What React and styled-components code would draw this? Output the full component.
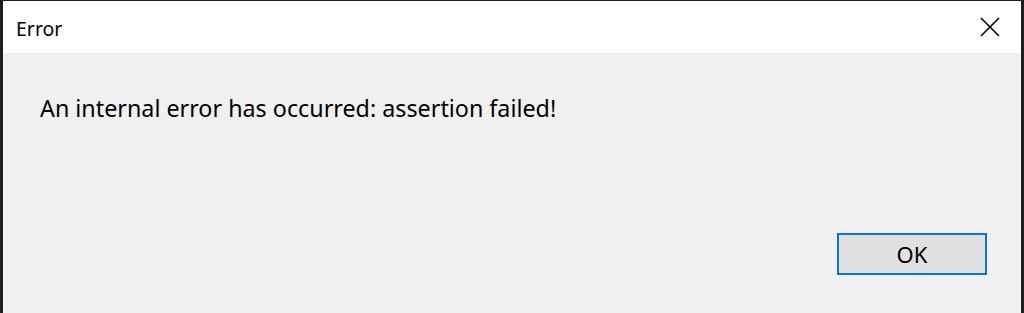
import React from "react";
import styled, { createGlobalStyle } from "styled-components";

const Global = createGlobalStyle`
  html, body {
    margin: 0;
    padding: 0;
    background: #1e1f1c;
    overflow: hidden;
  }
  #root {
    width: 1024px;
    height: 313px;
  }
`;

const Screen = styled.div`
  width: 1024px;
  height: 313px;
  padding: 1px 3px 0 3px;
  box-sizing: border-box;
  display: flex;
`;

const Dialog = styled.div`
  flex: 1;
  display: flex;
  flex-direction: column;
  font-family: "Noto Sans", "Segoe UI", sans-serif;
  color: #000;
`;

const TitleBar = styled.div`
  height: 52px;
  flex: none;
  background: #ffffff;
  display: flex;
  align-items: center;
  justify-content: space-between;
  padding-left: 13px;
`;

const Title = styled.span`
  font-size: 19.5px;
  line-height: 1;
  margin-top: 3px;
`;

const CloseButton = styled.button`
  width: 62px;
  height: 52px;
  border: none;
  background: transparent;
  display: flex;
  align-items: center;
  justify-content: center;
  padding: 0;
  cursor: pointer;
`;

const Body = styled.div`
  flex: 1;
  background: #f0f0f0;
  display: flex;
  flex-direction: column;
`;

const Message = styled.p`
  margin: 0;
  padding: 39px 0 0 37px;
  font-size: 23.3px;
  line-height: 32px;
`;

const Footer = styled.div`
  margin-top: auto;
  display: flex;
  justify-content: flex-end;
  padding: 0 34px 38px 0;
`;

const OkButton = styled.button`
  width: 150px;
  height: 42px;
  box-sizing: border-box;
  border: 2px solid #0078d7;
  background: #e1e1e1;
  font-family: inherit;
  font-size: 22px;
  color: #000;
  padding: 0;
  display: flex;
  align-items: center;
  justify-content: center;
`;

function CloseIcon() {
  return (
    <svg width="20" height="20" viewBox="0 0 20 20" fill="none">
      <path d="M1 1 L19 19 M19 1 L1 19" stroke="#000" strokeWidth="1.6" />
    </svg>
  );
}

export default function App() {
  return (
    <>
      <Global />
      <Screen>
        <Dialog>
          <TitleBar>
            <Title>Error</Title>
            <CloseButton aria-label="Close">
              <CloseIcon />
            </CloseButton>
          </TitleBar>
          <Body>
            <Message>An internal error has occurred: assertion failed!</Message>
            <Footer>
              <OkButton>OK</OkButton>
            </Footer>
          </Body>
        </Dialog>
      </Screen>
    </>
  );
}
